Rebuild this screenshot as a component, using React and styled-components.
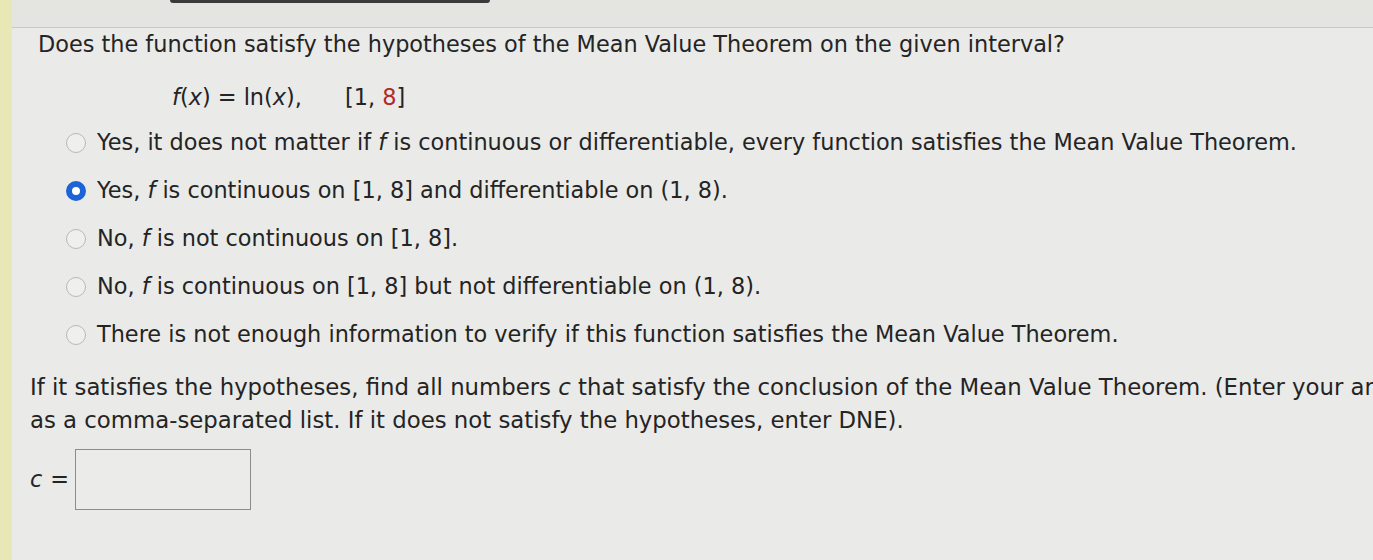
import React from "react";
import styled, { createGlobalStyle } from "styled-components";

const Global = createGlobalStyle`
  html, body { margin: 0; padding: 0; }
  body {
    width: 1373px; height: 560px; overflow: hidden;
    background: #e6e6e3;
    font-family: "DejaVu Sans", Verdana, sans-serif;
    color: #242424;
  }
`;

const Page = styled.div`
  display: flex;
  height: 560px;
`;

const SideStrip = styled.div`
  width: 12px;
  flex: none;
  background: #e7e8b5;
`;

const Main = styled.div`
  flex: 1;
  display: flex;
  flex-direction: column;
  min-width: 0;
`;

const TopBar = styled.div`
  height: 27px;
  flex: none;
  background: #e4e4e1;
  border-bottom: 1px solid #c9c9c6;
  display: flex;
`;

const TopTab = styled.div`
  margin-left: 158px;
  width: 320px;
  height: 3px;
  background: #3a3a3a;
  border-radius: 0 0 4px 4px;
`;

const Content = styled.div`
  flex: 1;
  background: #eaeae8;
  padding: 0 0 0 18px;
  font-size: 22.4px;
  line-height: 27px;
  overflow: hidden;
`;

const Question = styled.p`
  margin: 3px 0 0 8px;
  white-space: nowrap;
`;

const Formula = styled.div`
  margin: 26px 0 0 142px;
  display: flex;
  gap: 43px;
`;

const Red = styled.span`
  color: #b02a2a;
`;

const I = styled.i`
  font-style: italic;
`;

const Options = styled.div`
  margin: 18px 0 0 36px;
  display: flex;
  flex-direction: column;
  gap: 21px;
`;

const Option = styled.label`
  display: flex;
  align-items: center;
  gap: 11px;
  white-space: nowrap;
`;

const Radio = styled.span`
  width: 20px;
  height: 20px;
  flex: none;
  box-sizing: border-box;
  border-radius: 50%;
  border: ${(p) => (p.$checked ? "6px solid #1b63d6" : "1px solid #b9b9b6")};
  background: ${(p) => (p.$checked ? "#ffffff" : "#efefed")};
`;

const Para = styled.p`
  margin: 23px 0 0 0;
  font-size: 22.8px;
  line-height: 33px;
  white-space: nowrap;
`;

const AnswerRow = styled.div`
  margin-top: 12px;
  display: flex;
  align-items: center;
`;

const Equals = styled.span`
  margin: 0 6px 0 8px;
`;

const AnswerBox = styled.div`
  width: 176px;
  height: 61px;
  box-sizing: border-box;
  border: 1px solid #8c8c8a;
  background: #ebebe9;
`;

const options = [
  { text: <>Yes, it does not matter if <I>f</I> is continuous or differentiable, every function satisfies the Mean Value Theorem.</> },
  { text: <>Yes, <I>f</I> is continuous on [1, 8] and differentiable on (1, 8).</>, checked: true },
  { text: <>No, <I>f</I> is not continuous on [1, 8].</> },
  { text: <>No, <I>f</I> is continuous on [1, 8] but not differentiable on (1, 8).</> },
  { text: <>There is not enough information to verify if this function satisfies the Mean Value Theorem.</> },
];

export default function App() {
  return (
    <Page>
      <Global />
      <SideStrip />
      <Main>
        <TopBar>
          <TopTab />
        </TopBar>
        <Content>
          <Question>Does the function satisfy the hypotheses of the Mean Value Theorem on the given interval?</Question>
          <Formula>
            <span><I>f</I>(<I>x</I>) = ln(<I>x</I>),</span>
            <span>[1, <Red>8</Red>]</span>
          </Formula>
          <Options>
            {options.map((o, i) => (
              <Option key={i}>
                <Radio $checked={o.checked} />
                <span>{o.text}</span>
              </Option>
            ))}
          </Options>
          <Para>
            If it satisfies the hypotheses, find all numbers <I>c</I> that satisfy the conclusion of the Mean Value Theorem. (Enter your answer
            <br />
            as a comma-separated list. If it does not satisfy the hypotheses, enter DNE).
          </Para>
          <AnswerRow>
            <I>c</I>
            <Equals>=</Equals>
            <AnswerBox />
          </AnswerRow>
        </Content>
      </Main>
    </Page>
  );
}
